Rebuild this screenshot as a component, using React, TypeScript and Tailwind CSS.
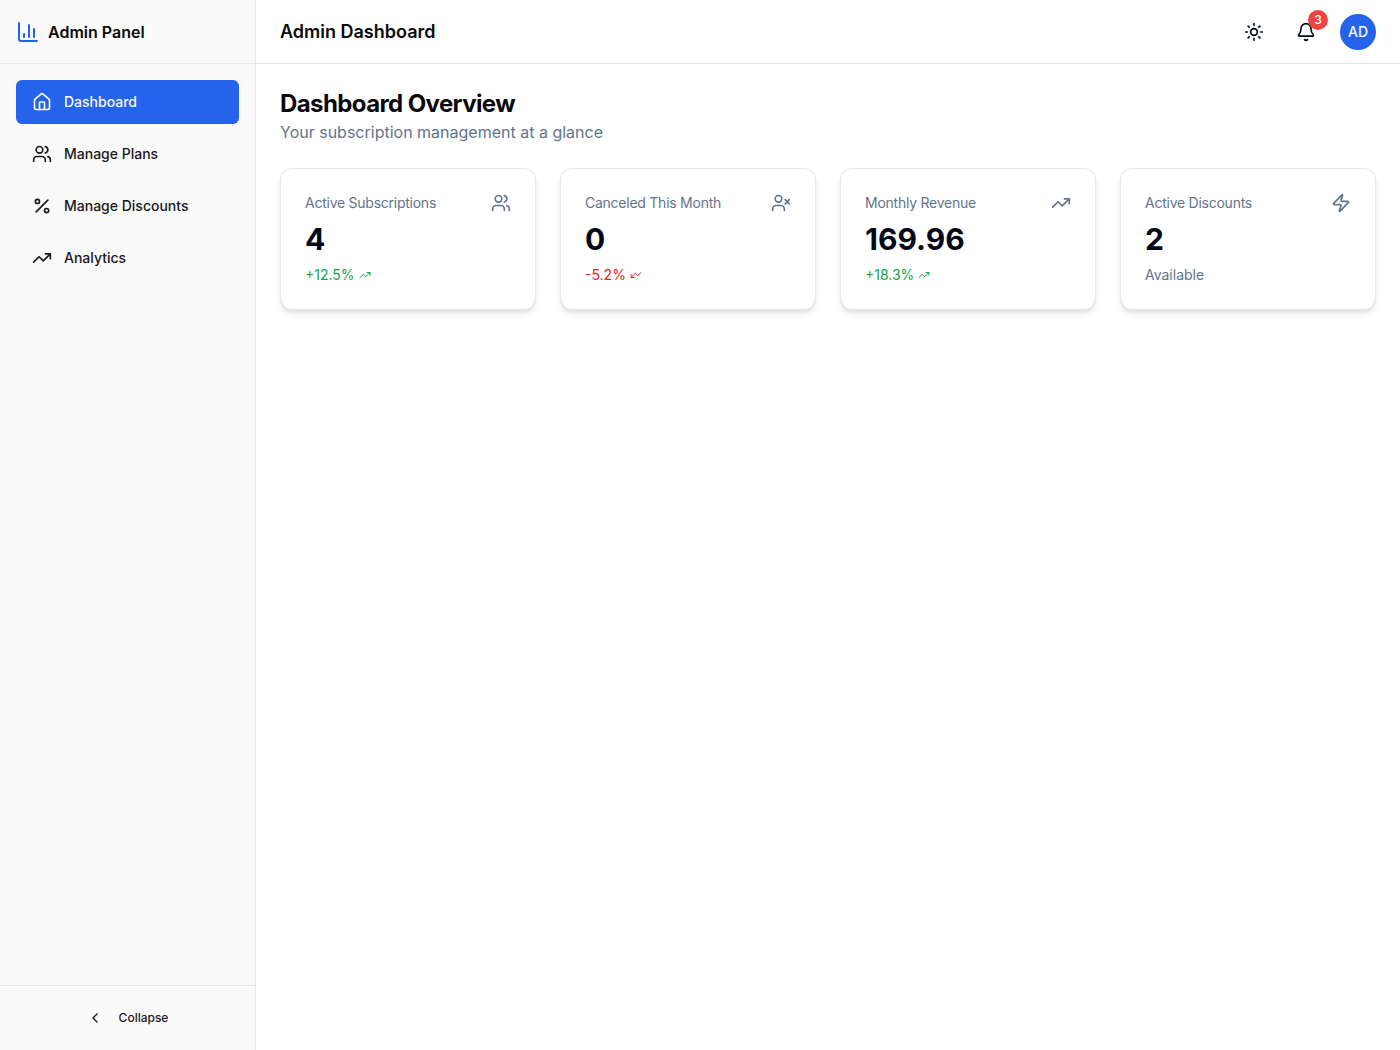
import React from "react";
import { ChartColumn, House, Users, Percent, TrendingUp, UserX, Zap, Sun, Bell, ChevronLeft } from "lucide-react";

const nav = [
  { label: "Dashboard", Icon: House, active: true },
  { label: "Manage Plans", Icon: Users },
  { label: "Manage Discounts", Icon: Percent },
  { label: "Analytics", Icon: TrendingUp },
];

const cards = [
  { title: "Active Subscriptions", value: "4", Icon: Users, note: "+12.5%", tone: "text-[#16a34a]", trend: "up" },
  { title: "Canceled This Month", value: "0", Icon: UserX, note: "-5.2%", tone: "text-[#dc2626]", trend: "down" },
  { title: "Monthly Revenue", value: "169.96", Icon: TrendingUp, note: "+18.3%", tone: "text-[#16a34a]", trend: "up" },
  { title: "Active Discounts", value: "2", Icon: Zap, note: "Available", tone: "text-[#64748b]" },
];

export default function App() {
  return (
    <div className="flex h-[1050px] w-[1400px] overflow-hidden bg-white text-[#020817] font-['Inter',sans-serif] antialiased">
      <aside className="flex w-[256px] shrink-0 flex-col border-r border-[#e2e8f0] bg-[#fafafa]">
        <div className="flex h-[64px] shrink-0 items-center gap-2 border-b border-[#e2e8f0] px-4">
          <ChartColumn size={24} strokeWidth={2} className="text-[#2563eb]" />
          <span className="text-base font-semibold text-[#09090b]">Admin Panel</span>
        </div>
        <nav className="flex flex-1 flex-col gap-2 p-4">
          {nav.map(({ label, Icon, active }) => (
            <div
              key={label}
              className={
                active
                  ? "flex h-[44px] items-center gap-3 rounded-md bg-[#2563eb] px-4 text-sm font-medium text-[#f8fafc]"
                  : "flex h-[44px] items-center gap-3 rounded-md px-4 text-sm font-medium text-[#18181b]"
              }
            >
              <Icon size={20} strokeWidth={2} />
              <span>{label}</span>
            </div>
          ))}
        </nav>
        <div className="flex h-[65px] shrink-0 items-center justify-center gap-4 border-t border-[#e2e8f0] text-xs font-medium text-[#18181b]">
          <ChevronLeft size={16} strokeWidth={2} />
          <span>Collapse</span>
        </div>
      </aside>
      <div className="flex min-w-0 flex-1 flex-col">
        <header className="flex h-[64px] shrink-0 items-center justify-between border-b border-[#e2e8f0] pl-6 pr-6">
          <h1 className="text-lg font-semibold text-[#09090b]">Admin Dashboard</h1>
          <div className="flex items-center gap-4">
            <div className="flex h-9 w-9 items-center justify-center">
              <Sun size={20} strokeWidth={2} />
            </div>
            <div className="relative flex h-9 w-9 items-center justify-center">
              <Bell size={20} strokeWidth={2} />
              <span className="absolute right-[-4px] top-[-4px] flex h-5 w-5 items-center justify-center rounded-full bg-[#ef4444] text-xs font-medium text-white">3</span>
            </div>
            <div className="flex h-9 w-9 items-center justify-center rounded-full bg-[#2563eb] text-sm font-medium text-[#f8fafc]">AD</div>
          </div>
        </header>
        <main className="flex-1 p-6">
          <h2 className="text-2xl font-bold tracking-tight leading-8 text-[#09090b]">Dashboard Overview</h2>
          <p className="text-base leading-6 text-[#64748b]">Your subscription management at a glance</p>
          <div className="mt-6 grid grid-cols-4 gap-6">
            {cards.map(({ title, value, Icon, note, tone, trend }) => (
              <div key={title} className="h-[142px] rounded-xl border border-[#e2e8f0] bg-white px-6 pt-6 shadow-md shadow-black/10">
                <div className="flex h-5 items-center justify-between">
                  <span className="text-sm font-normal tracking-[-0.25px] text-[#64748b]">{title}</span>
                  <Icon size={20} strokeWidth={2} className="text-[#64748b]" />
                </div>
                <div className="mt-2 text-3xl font-bold leading-9 text-[#020817]">{value}</div>
                <div className={`mt-2 flex h-5 items-center gap-1 text-sm ${tone}`}>
                  <span>{note}</span>
                  {trend && <TrendingUp size={12} strokeWidth={2} className={trend === "down" ? "rotate-180" : ""} />}
                </div>
              </div>
            ))}
          </div>
        </main>
      </div>
    </div>
  );
}
